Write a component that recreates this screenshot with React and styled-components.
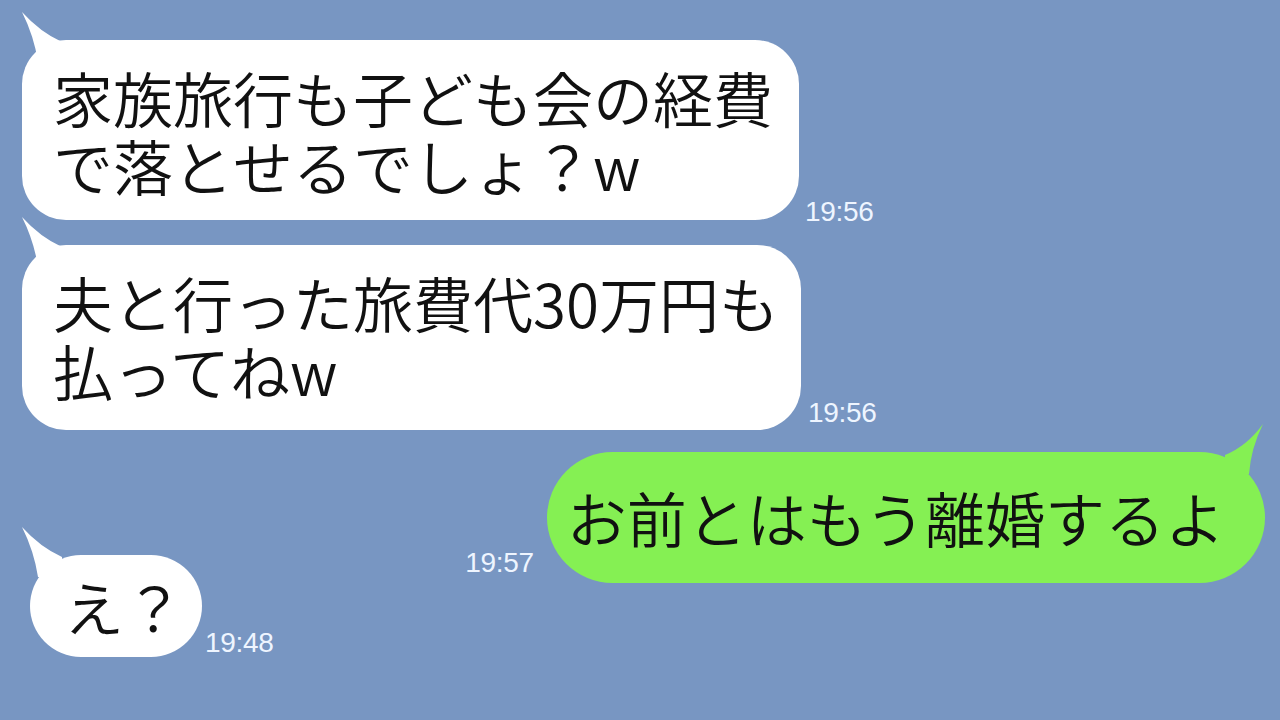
import React from "react";
import styled, { createGlobalStyle } from "styled-components";

const BG = "#7896c2";
const WHITE = "#ffffff";
const GREEN = "#85f053";

const GlobalStyle = createGlobalStyle`
  html, body {
    margin: 0;
    padding: 0;
    background: ${BG};
  }
`;

const Screen = styled.div`
  width: 1280px;
  height: 720px;
  box-sizing: border-box;
  padding: 40px 15px 0 22px;
  background: ${BG};
  display: flex;
  flex-direction: column;
  overflow: hidden;
  font-family: "Noto Sans CJK JP", "Noto Sans", sans-serif;
`;

const Row = styled.div`
  display: flex;
  flex-direction: ${({ $mine }) => ($mine ? "row-reverse" : "row")};
  align-items: flex-end;
  margin-top: ${({ $gap }) => $gap || 0}px;
  padding-left: ${({ $indent }) => $indent || 0}px;
`;

const Bubble = styled.div`
  position: relative;
  box-sizing: border-box;
  background: ${({ $mine }) => ($mine ? GREEN : WHITE)};
  border-radius: ${({ $radius }) => $radius}px;
  padding: ${({ $pad }) => $pad};
  color: #111;
  font-size: 60px;
  font-weight: 350;
  line-height: 68px;
  white-space: nowrap;
`;

const Tail = styled.svg`
  position: absolute;
  top: -28px;
  width: 40px;
  height: 50px;
  ${({ $mine, $shift }) =>
    $mine ? `right: ${$shift || 0}px;` : `left: ${$shift || 0}px;`}
`;

const Time = styled.span`
  font-family: "Liberation Sans", "DejaVu Sans", sans-serif;
  font-size: 28px;
  line-height: 28px;
  color: #eef5ff;
  margin: 0 ${({ $gap }) => $gap}px ${({ $drop }) => $drop}px;
  letter-spacing: -0.3px;
`;

const LeftTail = ({ shift }) => (
  <Tail viewBox="0 0 40 50" $shift={shift}>
    <path d="M0 0 Q18 20 40 30 L40 50 L16 50 Q12 24 0 0 Z" fill={WHITE} />
  </Tail>
);

const RightTail = () => (
  <Tail viewBox="0 0 40 50" $mine>
    <path d="M38 0 Q22 22 0 31 L0 50 L24 50 Q26 24 38 0 Z" fill={GREEN} />
  </Tail>
);

const App = () => {
  return (
    <>
      <GlobalStyle />
      <Screen>
        <Row>
          <Bubble $radius={44} $pad="23px 26px 21px 31px">
            <LeftTail />
            家族旅行も子ども会の経費
            <br />
            で落とせるでしょ？w
          </Bubble>
          <Time $gap={6} $drop={-6}>19:56</Time>
        </Row>

        <Row $gap={25}>
          <Bubble $radius={44} $pad="23px 22px 26px 31px">
            <LeftTail />
            夫と行った旅費代30万円も
            <br />
            払ってねw
          </Bubble>
          <Time $gap={7} $drop={3}>19:56</Time>
        </Row>

        <Row $mine $gap={22}>
          <Bubble $mine $radius={66} $pad="31px 40px 32px 20px">
            <RightTail />
            お前とはもう離婚するよ
          </Bubble>
          <Time $gap={13} $drop={6}>19:57</Time>
        </Row>

        <Row $gap={-28} $indent={8}>
          <Bubble $radius={51} $pad="17px 18px 17px 34px">
            <LeftTail shift={-8} />
            え？
          </Bubble>
          <Time $gap={3} $drop={0}>19:48</Time>
        </Row>
      </Screen>
    </>
  );
};

export default App;
